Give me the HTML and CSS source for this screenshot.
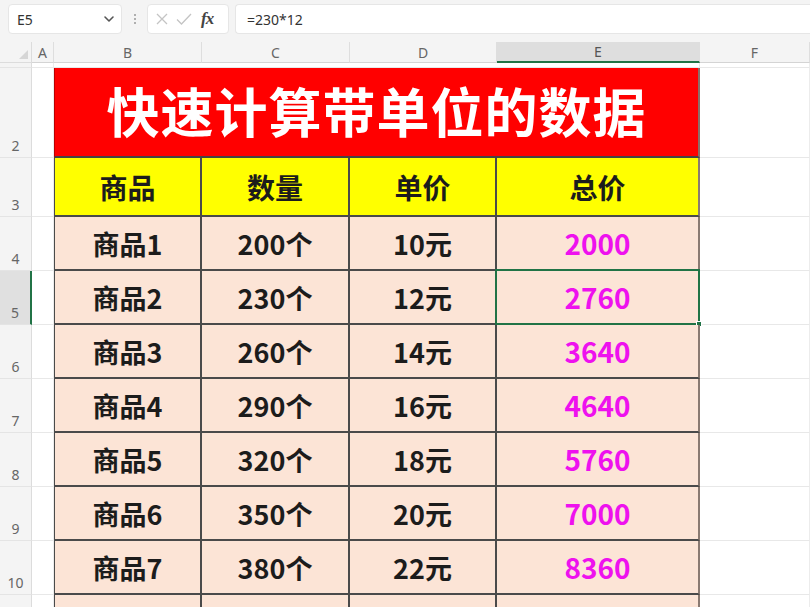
FILE: index.html
```html
<!DOCTYPE html>
<html lang="zh">
<head>
<meta charset="utf-8">
<link rel="stylesheet" href="styles.css">
</head>
<body>
<div class="app">
  <div class="toolbar">
    <div class="namebox"><span class="ref">E5</span>
      <svg class="chev" width="12" height="8" viewBox="0 0 12 8"><path d="M2 2 L6 6 L10 2" fill="none" stroke="#555" stroke-width="1.6" stroke-linecap="round" stroke-linejoin="round"/></svg>
    </div>
    <div class="dots"><i></i><i></i><i></i></div>
    <div class="fxbox">
      <svg width="16" height="16" viewBox="0 0 16 16"><path d="M3 3 L13 13 M13 3 L3 13" stroke="#c4c4c4" stroke-width="1.3" fill="none"/></svg>
      <svg width="18" height="16" viewBox="0 0 18 16"><path d="M2 8.5 L6.5 13 L16 3" stroke="#c4c4c4" stroke-width="1.3" fill="none"/></svg>
      <span class="fx">fx</span>
    </div>
    <div class="formula">=230*12</div>
  </div>
  <div class="sheet">
    <div class="corner"><span class="tri"></span></div>
    <div class="ch">A</div>
    <div class="ch">B</div>
    <div class="ch">C</div>
    <div class="ch">D</div>
    <div class="ch sel">E</div>
    <div class="ch">F</div>

    <div class="rh tiny"></div>
    <div class="gc tiny"></div>
    <div class="gc tiny span4"></div>
    <div class="gc tiny"></div>

    <div class="rh">2</div>
    <div class="gc"></div>
    <div class="title span4">快速计算带单位的数据</div>
    <div class="gc"></div>

    <div class="rh">3</div>
    <div class="gc"></div>
    <div class="tc head first">商品</div>
    <div class="tc head">数量</div>
    <div class="tc head">单价</div>
    <div class="tc head last">总价</div>
    <div class="gc"></div>

    <div class="rh">4</div>
    <div class="gc"></div>
    <div class="tc first">商品1</div>
    <div class="tc">200个</div>
    <div class="tc">10元</div>
    <div class="tc last total">2000</div>
    <div class="gc"></div>

    <div class="rh rsel">5</div>
    <div class="gc"></div>
    <div class="tc first">商品2</div>
    <div class="tc">230个</div>
    <div class="tc">12元</div>
    <div class="tc last total active">2760<span class="selbox"><span class="handle"></span></span></div>
    <div class="gc"></div>

    <div class="rh">6</div>
    <div class="gc"></div>
    <div class="tc first">商品3</div>
    <div class="tc">260个</div>
    <div class="tc">14元</div>
    <div class="tc last total">3640</div>
    <div class="gc"></div>

    <div class="rh">7</div>
    <div class="gc"></div>
    <div class="tc first">商品4</div>
    <div class="tc">290个</div>
    <div class="tc">16元</div>
    <div class="tc last total">4640</div>
    <div class="gc"></div>

    <div class="rh">8</div>
    <div class="gc"></div>
    <div class="tc first">商品5</div>
    <div class="tc">320个</div>
    <div class="tc">18元</div>
    <div class="tc last total">5760</div>
    <div class="gc"></div>

    <div class="rh">9</div>
    <div class="gc"></div>
    <div class="tc first">商品6</div>
    <div class="tc">350个</div>
    <div class="tc">20元</div>
    <div class="tc last total">7000</div>
    <div class="gc"></div>

    <div class="rh">10</div>
    <div class="gc"></div>
    <div class="tc first">商品7</div>
    <div class="tc">380个</div>
    <div class="tc">22元</div>
    <div class="tc last total">8360</div>
    <div class="gc"></div>

    <div class="rh end"></div>
    <div class="gc end"></div>
    <div class="tc first end"></div>
    <div class="tc end"></div>
    <div class="tc end"></div>
    <div class="tc last end"></div>
    <div class="gc end"></div>
  </div>
</div>
</body>
</html>
```

FILE: styles.css
```css
* { box-sizing: border-box; }
html, body { margin: 0; padding: 0; }
body {
  width: 810px;
  height: 607px;
  overflow: hidden;
  background: #ffffff;
  font-family: "Noto Sans", "Noto Sans CJK SC", sans-serif;
}
.app { display: flex; flex-direction: column; height: 607px; }

.toolbar {
  height: 42px;
  flex: none;
  background: #f4f4f4;
  display: flex;
  align-items: flex-start;
  padding: 4px 0 0 8px;
}
.namebox {
  width: 114px;
  height: 30px;
  background: #fff;
  border: 1px solid #e6e6e6;
  border-radius: 4px;
  display: flex;
  align-items: center;
  justify-content: space-between;
  padding: 0 6px 0 8px;
  font-size: 14px;
  color: #333;
}
.dots {
  width: 25px;
  height: 30px;
  display: flex;
  flex-direction: column;
  align-items: center;
  justify-content: center;
  gap: 2px;
}
.dots i { display: block; width: 2px; height: 2px; background: #999; border-radius: 1px; }
.fxbox {
  width: 82px;
  height: 30px;
  background: #fff;
  border: 1px solid #e6e6e6;
  border-radius: 4px;
  display: flex;
  align-items: center;
  gap: 5px;
  padding: 0 0 0 6px;
}
.fx {
  font-family: "Liberation Serif", serif;
  font-style: italic;
  font-weight: bold;
  font-size: 17px;
  color: #444;
  margin-left: 3px;
  letter-spacing: -1px;
}
.formula {
  flex: 1;
  margin-left: 6px;
  height: 30px;
  background: #fff;
  border: 1px solid #e6e6e6;
  border-right: none;
  border-radius: 4px 0 0 4px;
  display: flex;
  align-items: center;
  padding-left: 11px;
  font-size: 14px;
  color: #333;
}

.sheet {
  flex: 1;
  display: grid;
  grid-template-columns: 32px 22px 148px 148px 147px 203px 110px;
  grid-template-rows: 21px 5px 90px 59px repeat(7, 54px) 1fr;
  overflow: hidden;
}
.corner {
  background: #f4f4f4;
  border-right: 1px solid #dcdcdc;
  border-bottom: 1px solid #dcdcdc;
  position: relative;
}
.tri {
  position: absolute;
  right: 3px;
  bottom: 3px;
  width: 0; height: 0;
  border-left: 9px solid transparent;
  border-bottom: 9px solid #d6d6d6;
}
.ch {
  background: #f4f4f4;
  border-right: 1px solid #dedede;
  border-bottom: 1px solid #d4d4d4;
  display: flex;
  align-items: center;
  justify-content: center;
  font-size: 14px;
  color: #666;
}
.ch.sel {
  background: #dedede;
  border-bottom: 2px solid #217346;
  color: #555;
}
.rh {
  background: #f4f4f4;
  border-right: 1px solid #dcdcdc;
  border-bottom: 1px solid #e4e4e4;
  display: flex;
  align-items: flex-end;
  justify-content: center;
  padding-bottom: 2px;
  font-size: 14px;
  color: #666;
}
.rh.rsel {
  background: #e0e0e0;
  border-right: 2px solid #217346;
}
.rh.tiny { overflow: hidden; }
.gc {
  background: #fff;
  border-right: 1px solid #ececec;
  border-bottom: 1px solid #e8e8e8;
}
.span4 { grid-column: span 4; }

.title {
  background: #ff0000;
  color: #fff;
  font-family: "Noto Sans CJK SC", sans-serif;
  font-weight: 700;
  font-size: 53px;
  display: flex;
  align-items: center;
  justify-content: center;
  border-left: 1px solid #b00;
  border-right: 2px solid #8a6f68;
  border-bottom: 2px solid #444;
  padding-bottom: 4px;
  letter-spacing: 1px;
}

.tc {
  background: #fce4d6;
  font-family: "Noto Sans CJK SC", sans-serif;
  font-weight: 700;
  font-size: 27px;
  color: #1c1c1c;
  display: flex;
  align-items: center;
  justify-content: center;
  border-right: 2px solid #4a4a4a;
  border-bottom: 2px solid #4a4a4a;
  position: relative;
}
.tc.first { border-left: 1px solid #4a4a4a; }
.tc.last { border-right: 2px solid #8a7a72; }
.tc.head { background: #ffff00; font-size: 28px; }
.tc.total { color: #ee11ee; font-size: 28px; }
.end { border-bottom: none; }
.tc.end { border-bottom: none; }
.selbox {
  position: absolute;
  left: -2px;
  top: -2px;
  right: -2px;
  bottom: -2px;
  border: 2px solid #217346;
  pointer-events: none;
}
.handle {
  position: absolute;
  right: -4px;
  bottom: -4px;
  width: 6px;
  height: 6px;
  background: #217346;
  border: 1px solid #fff;
}
```
